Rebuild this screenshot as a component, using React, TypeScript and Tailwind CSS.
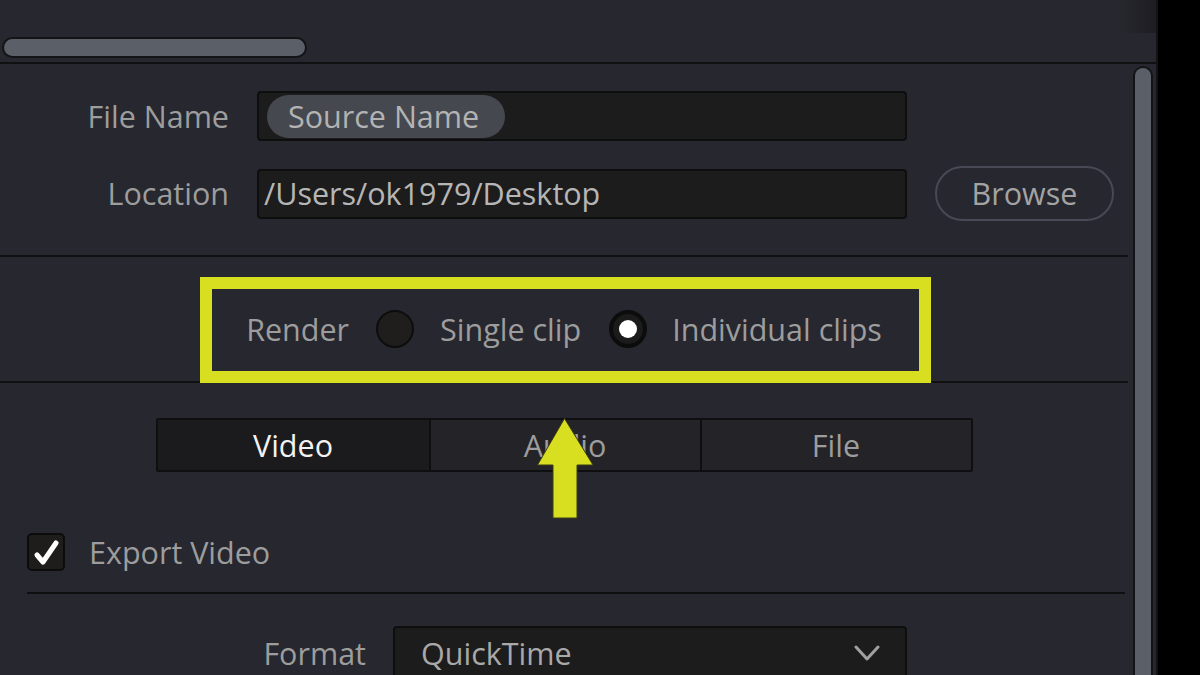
const label = "text-[30.5px] leading-none text-[#9d9d9d]";

const Radio = ({ checked }: { checked?: boolean }) => (
  <div
    className={`w-[38px] h-[38px] rounded-full flex items-center justify-center shrink-0 ${
      checked ? "bg-[#1b1b1c] border-[4px] border-[#0c0c0d]" : "bg-[#1f1e1d] border-2 border-[#0d0d0e]"
    }`}
  >
    {checked && <div className="w-[18px] h-[18px] rounded-full bg-white" />}
  </div>
);

const App = () => {
  return (
    <div className="relative w-[1200px] h-[675px] bg-black flex overflow-hidden font-['Open_Sans','Noto_Sans',sans-serif]">
      <div className="w-[1158px] h-full bg-[#27272f] border-r-2 border-[#131316] flex flex-col">
        {/* top strip with horizontal scrollbar */}
        <div className="h-[62px] shrink-0 flex">
          <div className="flex-1 flex items-end pb-[4px] pl-[2px]">
            <div className="w-[305px] h-[21px] rounded-full bg-[#5b5f67] border-2 border-[#141416]" />
          </div>
          <div className="w-[36px] h-[33px] bg-gradient-to-r from-[#27272f] to-[#1e1d22]" />
        </div>
        <div className="h-[2px] shrink-0 bg-[#101013]" />

        <div className="flex-1 flex min-h-0">
          <div className="w-[1128px] overflow-hidden">
            {/* File name / location */}
            <div className="pt-[27px] pb-[34px] flex flex-col gap-[25px]">
              <div className="flex items-center gap-[28px]">
                <div className={`w-[229px] text-right ${label}`}>File Name</div>
                <div className="w-[650px] h-[50px] rounded-[4px] bg-[#1d1c1c] border-2 border-[#0e0e0f] flex items-center pl-[8px]">
                  <div className="w-[238px] h-[43px] rounded-full bg-[#45484f] flex items-center pl-[21px] text-[30.5px] leading-none text-[#b3b3b3]">
                    Source Name
                  </div>
                </div>
              </div>
              <div className="flex items-center gap-[28px] h-[55px]">
                <div className={`w-[229px] text-right ${label}`}>Location</div>
                <div className="w-[650px] h-[50px] rounded-[4px] bg-[#1d1c1c] border-2 border-[#0e0e0f] flex items-center pl-[5px] text-[30.5px] leading-none text-[#b6b6b6]">
                  /Users/ok1979/Desktop
                </div>
                <div className="w-[179px] h-[55px] rounded-full border-2 border-[#474954] flex items-center justify-center text-[30.5px] leading-none text-[#a3a3a3]">
                  Browse
                </div>
              </div>
            </div>
            <div className="h-[2px] bg-[#101013]" />

            {/* Render mode */}
            <div className="h-[124px] pt-[53px] flex justify-center">
              <div className="flex items-center h-[38px]">
                <span className={label}>Render</span>
                <div className="ml-[27px]"><Radio /></div>
                <span className={`ml-[26px] ${label}`}>Single clip</span>
                <div className="ml-[28px]"><Radio checked /></div>
                <span className={`ml-[25px] ${label}`}>Individual clips</span>
              </div>
            </div>
            <div className="h-[2px] bg-[#101013]" />

            {/* Tabs */}
            <div className="pt-[35px] flex justify-center">
              <div className="w-[817px] h-[54px] grid grid-cols-3 border-2 border-[#0f0f11] rounded-[2px]">
                <div className="bg-[#1b1b1d] flex items-center justify-center text-[30.5px] leading-none text-[#f2f2f2]">Video</div>
                <div className="bg-[#232328] border-l-2 border-[#0f0f11] flex items-center justify-center text-[30.5px] leading-none text-[#9d9d9d]">Audio</div>
                <div className="bg-[#232328] border-l-2 border-[#0f0f11] flex items-center justify-center text-[30.5px] leading-none text-[#9d9d9d]">File</div>
              </div>
            </div>

            {/* Export video */}
            <div className="pt-[61px] pl-[27px] flex items-center gap-[24px]">
              <div className="w-[38px] h-[38px] rounded-[5px] bg-[#1e1d1c] border-2 border-[#0c0c0d] flex items-center justify-center">
                <svg width="34" height="34" viewBox="0 0 34 34">
                  <polyline
                    points="8,20 14,27 27,8"
                    fill="none"
                    stroke="white"
                    strokeWidth="5"
                    strokeLinecap="round"
                    strokeLinejoin="round"
                  />
                </svg>
              </div>
              <span className={label}>Export Video</span>
            </div>
            <div className="mt-[21px] ml-[27px] mr-[3px] h-[2px] bg-[#0f0f12]" />

            {/* Format */}
            <div className="pt-[32px] flex items-center gap-[27px]">
              <div className={`w-[366px] text-right ${label}`}>Format</div>
              <div className="w-[514px] h-[54px] rounded-[4px] bg-[#1d1c1c] border-2 border-[#0e0e0f] flex items-center justify-between pl-[26px] pr-[25px] text-[30.5px] leading-none text-[#a9a9a9]">
                QuickTime
                <svg width="26" height="16" viewBox="0 0 26 16">
                  <polyline points="2,2 13,14 24,2" fill="none" stroke="#a0a0a0" strokeWidth="3" strokeLinecap="round" strokeLinejoin="round" />
                </svg>
              </div>
            </div>
          </div>

          {/* vertical scrollbar */}
          <div className="flex-1 pt-[2px] pl-[5px]">
            <div className="w-[20px] h-full rounded-t-full bg-[#5b5f67] border-2 border-b-0 border-[#141416]" />
          </div>
        </div>
      </div>

      {/* annotation: highlight frame */}
      <div className="absolute left-[200px] top-[277px] w-[731px] h-[106px] border-[12px] border-[#d8df20]" />

      {/* annotation: arrow */}
      <svg className="absolute left-[537px] top-[418px]" width="57" height="101" viewBox="0 0 57 101">
        <polygon
          points="27.5,0.5 56,47 40,47 40,100 16,100 16,47 0.5,47"
          fill="#d8df20"
          stroke="#3a3c14"
          strokeWidth="1"
        />
      </svg>
    </div>
  );
};

export default App;
